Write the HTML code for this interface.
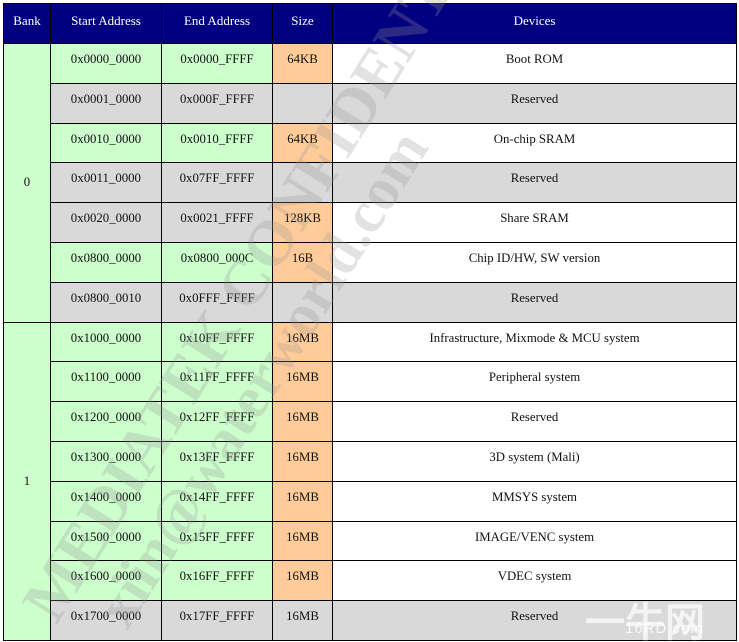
<!DOCTYPE html>
<html><head><meta charset="utf-8"><style>
html,body{margin:0;padding:0;background:#fff;width:739px;height:642px;overflow:hidden;position:relative}
#wrap{position:absolute;left:0;top:0;width:739px;height:642px;overflow:hidden}
table{position:absolute;left:3px;top:3px;border-collapse:collapse;table-layout:fixed;width:734px;font-family:"Liberation Serif",serif;font-size:12.8px;color:#111}
td,th{border:1.5px solid #000;text-align:center;vertical-align:top;padding:8px 0 0 0;height:30.8px;box-sizing:content-box;white-space:nowrap}
th{background:#000080;color:#fff;font-weight:normal;font-size:13px;padding-top:9px;height:30px}
.g{background:#ccffcc}.y{background:#d9d9d9}.o{background:#ffcc99}.w{background:#fff}
td.b{vertical-align:middle;padding:0}
.wm{position:absolute;font-family:"Liberation Serif",serif;font-weight:bold;color:rgba(150,150,150,0.28);white-space:nowrap;transform-origin:left bottom;pointer-events:none}
</style></head><body><div id="wrap">
<table>
<colgroup><col style="width:47px"><col style="width:111px"><col style="width:111px"><col style="width:60px"><col></colgroup>
<tr><th>Bank</th><th>Start Address</th><th>End Address</th><th>Size</th><th>Devices</th></tr>
<tr><td class="g b" rowspan="7">0</td><td class="g">0x0000_0000</td><td class="g">0x0000_FFFF</td><td class="o">64KB</td><td class="w">Boot ROM</td></tr>
<tr><td class="y">0x0001_0000</td><td class="y">0x000F_FFFF</td><td class="y"></td><td class="y">Reserved</td></tr>
<tr><td class="g">0x0010_0000</td><td class="g">0x0010_FFFF</td><td class="o">64KB</td><td class="w">On-chip SRAM</td></tr>
<tr><td class="y">0x0011_0000</td><td class="y">0x07FF_FFFF</td><td class="y"></td><td class="y">Reserved</td></tr>
<tr><td class="y">0x0020_0000</td><td class="y">0x0021_FFFF</td><td class="o">128KB</td><td class="w">Share SRAM</td></tr>
<tr><td class="g">0x0800_0000</td><td class="g">0x0800_000C</td><td class="o">16B</td><td class="w">Chip ID/HW, SW version</td></tr>
<tr><td class="y">0x0800_0010</td><td class="y">0x0FFF_FFFF</td><td class="y"></td><td class="y">Reserved</td></tr>
<tr><td class="g b" rowspan="8">1</td><td class="g">0x1000_0000</td><td class="g">0x10FF_FFFF</td><td class="o">16MB</td><td class="w">Infrastructure, Mixmode &amp; MCU system</td></tr>
<tr><td class="g">0x1100_0000</td><td class="g">0x11FF_FFFF</td><td class="o">16MB</td><td class="w">Peripheral system</td></tr>
<tr><td class="g">0x1200_0000</td><td class="g">0x12FF_FFFF</td><td class="o">16MB</td><td class="w">Reserved</td></tr>
<tr><td class="g">0x1300_0000</td><td class="g">0x13FF_FFFF</td><td class="o">16MB</td><td class="w">3D system (Mali)</td></tr>
<tr><td class="g">0x1400_0000</td><td class="g">0x14FF_FFFF</td><td class="o">16MB</td><td class="w">MMSYS system</td></tr>
<tr><td class="g">0x1500_0000</td><td class="g">0x15FF_FFFF</td><td class="o">16MB</td><td class="w">IMAGE/VENC system</td></tr>
<tr><td class="g">0x1600_0000</td><td class="g">0x16FF_FFFF</td><td class="o">16MB</td><td class="w">VDEC system</td></tr>
<tr><td class="y">0x1700_0000</td><td class="y">0x17FF_FFFF</td><td class="y">16MB</td><td class="y">Reserved</td></tr>
</table>
<div class="wm" style="left:70px;top:560px;font-size:64px;transform:rotate(-58deg)">MEDIATEK CONFIDENTIAL</div>
<div class="wm" style="left:140px;top:570px;font-size:60px;transform:rotate(-58deg)">xiin@waterworld.com</div>
<div style="position:absolute;left:585px;top:590px;font-family:'Liberation Sans',sans-serif;font-size:40px;font-weight:bold;color:rgba(255,255,255,0.7)">一牛网</div>
<div style="position:absolute;left:625px;top:620px;font-family:'Liberation Sans',sans-serif;font-size:15px;color:rgba(255,255,255,0.8);letter-spacing:1px">16RD.com</div>
</div></body></html>
